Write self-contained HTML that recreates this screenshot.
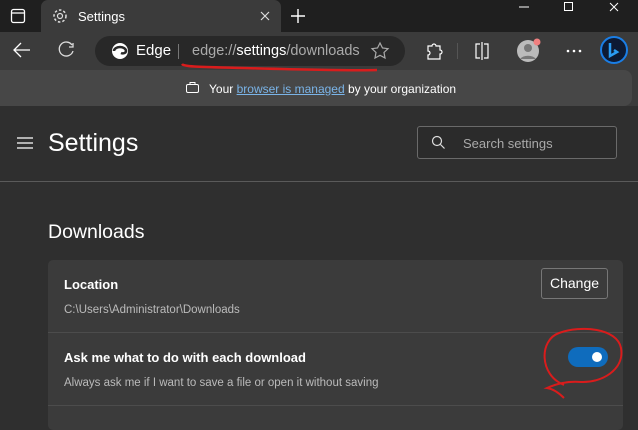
<!DOCTYPE html>
<html><head><style>
*{margin:0;padding:0;box-sizing:border-box}
body{width:638px;height:419px;overflow:hidden;background:#2f2f2f;font-family:"Liberation Sans",sans-serif;color:#fff;position:relative}
.abs{position:absolute}
</style></head><body>
<div class="abs" style="left:0;top:0;width:638px;height:32px;background:#1f1f1f"></div>
<div class="abs" style="left:41px;top:0;width:240px;height:32px;background:#3b3b3b;border-radius:7px 7px 0 0"></div>
<svg class="abs" style="left:0;top:0" width="638" height="32">
<rect x="11.5" y="9.5" width="13" height="13" rx="2" fill="none" stroke="#fff" stroke-width="1.3"/><line x1="11.5" y1="13" x2="24.5" y2="13" stroke="#fff" stroke-width="1.3"/>
<circle cx="60" cy="16" r="2.5" fill="none" stroke="#ddd" stroke-width="1.2"/><circle cx="60" cy="16" r="6" fill="none" stroke="#ddd" stroke-width="1.5" stroke-dasharray="2.5 2"/>
<path d="M261 12l8 8M269 12l-8 8" stroke="#ddd" stroke-width="1.2"/>
<path d="M298 9v14M291 16h14" stroke="#fff" stroke-width="1.4"/>
<path d="M519 7h10" stroke="#fff"/><rect x="564.5" y="2.5" width="8" height="8" fill="none" stroke="#fff"/>
<path d="M610 3l8 8M618 3l-8 8" stroke="#fff"/>
</svg>
<div class="abs" style="left:78px;top:9px;font-size:13px;color:#fff">Settings</div>
<div class="abs" style="left:0;top:32px;width:638px;height:74px;background:#3b3b3b"></div>
<div class="abs" style="left:95px;top:36px;width:310px;height:30px;background:#282828;border-radius:15px"></div>
<svg class="abs" style="left:0;top:32px" width="638" height="40">
<path d="M30 18H14M21 11l-7 7 7 7" stroke="#fff" stroke-width="1.3" fill="none"/>
<path d="M72 13a7 7 0 1 0 1 6M73 11v4h-4" stroke="#ddd" stroke-width="1.3" fill="none"/>
<circle cx="120" cy="19" r="8" fill="#fff"/><path d="M114 19a6 4 0 0 1 12 0c0 2-3 3-5 2" stroke="#282828" stroke-width="2.5" fill="none"/>
<line x1="178.5" y1="12" x2="178.5" y2="27" stroke="#777"/>
<path d="M380 11l2.5 5 5.5 .7-4 3.8 1 5.5-5-2.7-5 2.7 1-5.5-4-3.8 5.5-.7z" fill="none" stroke="#aaa" stroke-width="1.2"/>
<path d="M428 14h4a2 2 0 0 1 4 0h4v4a2 2 0 0 1 0 4v5h-12v-4a2 2 0 0 0 0-4z" fill="none" stroke="#fff" stroke-width="1.2"/>
<line x1="457.5" y1="11" x2="457.5" y2="27" stroke="#555"/>
<path d="M480 12h-4v14h4M484 12h4v14h-4M482 10v18" fill="none" stroke="#fff" stroke-width="1.2"/>
<circle cx="528" cy="19" r="11" fill="#bbb"/><circle cx="528" cy="16" r="4" fill="#777"/><path d="M520 27a9 6 0 0 1 16 0" fill="#777"/><circle cx="537" cy="10" r="3.5" fill="#f08080"/>
<circle cx="568" cy="19" r="1.3" fill="#fff"/><circle cx="574" cy="19" r="1.3" fill="#fff"/><circle cx="580" cy="19" r="1.3" fill="#fff"/>
<circle cx="614" cy="18" r="13" fill="#0d1a33" stroke="#1a7ee6" stroke-width="2"/><path d="M610 11v13l7-4-3-2" stroke="#2a9df4" stroke-width="2.5" fill="none"/>
</svg>
<div class="abs" style="left:136px;top:42px;font-size:15px;color:#fff">Edge</div>
<div class="abs" style="left:192px;top:43px;font-size:14.5px;color:#aaa">edge://<span style="color:#fff">settings</span>/downloads</div>
<div class="abs" style="left:0;top:70px;width:632px;height:36px;background:#474747;border-radius:0 8px 8px 0"></div>
<svg class="abs" style="left:185px;top:80px" width="16" height="14"><rect x="1.5" y="4.5" width="12" height="8" rx="1.5" fill="none" stroke="#fff"/><path d="M5 4.5v-2h5v2" fill="none" stroke="#fff"/></svg>
<div class="abs" style="left:209px;top:82px;font-size:12px;color:#fff">Your <span style="color:#7ab4e8;text-decoration:underline">browser is managed</span> by your organization</div>
<div class="abs" style="left:0;top:181px;width:638px;height:1px;background:#5a5a5a"></div>
<svg class="abs" style="left:17px;top:137px" width="18" height="12"><path d="M0 1h16M0 6h16M0 11h16" stroke="#fff" stroke-width="1.2"/></svg>
<div class="abs" style="left:48px;top:129px;font-size:25px;color:#fff">Settings</div>
<div class="abs" style="left:417px;top:126px;width:200px;height:33px;border:1px solid #6a6a6a;border-radius:3px;background:#2b2b2b"></div>
<svg class="abs" style="left:431px;top:135px" width="16" height="16"><circle cx="6" cy="6" r="4.5" fill="none" stroke="#ddd" stroke-width="1.2"/><path d="M9.5 9.5l4 4" stroke="#ddd" stroke-width="1.2"/></svg>
<div class="abs" style="left:463px;top:136px;font-size:13px;color:#aaa">Search settings</div>
<div class="abs" style="left:48px;top:221px;font-size:19.5px;color:#fff">Downloads</div>
<div class="abs" style="left:48px;top:260px;width:575px;height:170px;background:#3b3b3b;border-radius:5px"></div>
<div class="abs" style="left:48px;top:332px;width:575px;height:1px;background:#4c4c4c"></div>
<div class="abs" style="left:48px;top:405px;width:575px;height:1px;background:#4c4c4c"></div>
<div class="abs" style="left:64px;top:277px;font-size:13px;font-weight:bold">Location</div>
<div class="abs" style="left:64px;top:304px;font-size:11.5px;color:#bbb">C:\Users\Administrator\Downloads</div>
<div class="abs" style="left:541px;top:268px;width:67px;height:31px;border:1px solid #777;border-radius:3px;background:#3b3b3b;font-size:14px;text-align:center;line-height:29px">Change</div>
<div class="abs" style="left:64px;top:350px;font-size:13px;font-weight:bold">Ask me what to do with each download</div>
<div class="abs" style="left:64px;top:377px;font-size:11.5px;color:#bbb">Always ask me if I want to save a file or open it without saving</div>
<div class="abs" style="left:568px;top:347px;width:40px;height:20px;background:#0f6cbd;border-radius:10px"></div>
<div class="abs" style="left:592px;top:352px;width:10px;height:10px;background:#fff;border-radius:50%"></div>
<svg class="abs" style="left:0;top:0" width="638" height="419">
<path d="M182 64c2 3 20 3 60 4s110 3 135 2" stroke="#d91c1c" stroke-width="2.5" fill="none"/>
<path d="M564 385c-25-10-25-45-5-52 22-8 58-5 62 15 4 22-20 35-40 34-15-1-25 2-34 6 7 1 13 6 17 10" stroke="#d91c1c" stroke-width="2" fill="none"/>
</svg>
</body></html>
